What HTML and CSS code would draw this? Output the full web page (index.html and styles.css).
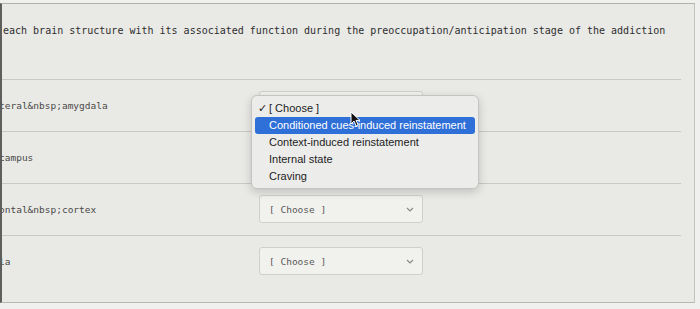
FILE: index.html
```html
<!DOCTYPE html>
<html lang="en">
<head>
    <meta charset="UTF-8">
    <meta name="viewport" content="width=device-width, initial-scale=1.0">
    <title>Match brain structures</title>
    <link rel="stylesheet" href="styles.css">
</head>
<body>
    <div class="page">
        <div class="frame">
            <p class="prompt">each brain structure with its associated function during the preoccupation/anticipation stage of the addiction</p>

            <div class="row">
                <span class="label">teral&amp;nbsp;amygdala</span>
                <div class="select"><span>[ Choose ]</span><svg width="8" height="5" viewBox="0 0 8 5"><path d="M1 1l3 3 3-3" fill="none" stroke="#8a8a8a" stroke-width="1.2"/></svg></div>
            </div>
            <div class="row">
                <span class="label">campus</span>
                <div class="select"><span>[ Choose ]</span><svg width="8" height="5" viewBox="0 0 8 5"><path d="M1 1l3 3 3-3" fill="none" stroke="#8a8a8a" stroke-width="1.2"/></svg></div>
            </div>
            <div class="row">
                <span class="label">ontal&amp;nbsp;cortex</span>
                <div class="select"><span>[ Choose ]</span><svg width="8" height="5" viewBox="0 0 8 5"><path d="M1 1l3 3 3-3" fill="none" stroke="#8a8a8a" stroke-width="1.2"/></svg></div>
            </div>
            <div class="row last">
                <span class="label">la</span>
                <div class="select"><span>[ Choose ]</span><svg width="8" height="5" viewBox="0 0 8 5"><path d="M1 1l3 3 3-3" fill="none" stroke="#8a8a8a" stroke-width="1.2"/></svg></div>
            </div>
        </div>

        <!-- open native dropdown of the first select -->
        <ul class="menu">
            <li class="item first"><span class="check">&#10003;</span>[ Choose ]</li>
            <li class="item active">Conditioned cues-induced reinstatement</li>
            <li class="item">Context-induced reinstatement</li>
            <li class="item">Internal state</li>
            <li class="item">Craving</li>
        </ul>

        <svg class="cursor" width="11" height="16" viewBox="0 0 11 16">
            <path d="M1 1v12l3-3 2.2 5 2-1-2.2-4.6H10z" fill="#111" stroke="#fff" stroke-width="1"/>
        </svg>
    </div>
</body>
</html>
```
FILE: styles.css
```css
body {
    margin: 0;
    padding: 0;
    background-color: #f0f0ee;
    overflow: hidden;
}

.page {
    position: relative;
    width: 700px;
    height: 309px;
    overflow: hidden;
}

.frame {
    width: 692px;
    margin-top: 3px;
    background-color: #e9e9e6;
    border-top: 1px solid #b2b2ae;
    border-left: 2px solid #5e5e5c;
    border-right: 1px solid #c2c2be;
    border-bottom: 1px solid #b6b6b2;
    overflow: hidden;
}

.prompt {
    margin: 0;
    height: 55px;
    padding: 20px 0 0 1px;
    font-family: "DejaVu Sans Mono", monospace;
    font-size: 10px;
    line-height: 14px;
    color: #2e2e2e;
    white-space: nowrap;
}

.row {
    display: flex;
    align-items: center;
    margin-right: 13px;
    padding: 11px 0 12px;
    border-top: 1px solid #c8c8c4;
}

.row.last {
    padding-bottom: 27px;
}

.label {
    flex: 0 0 260px;
    margin-left: -3px;
    font-family: "DejaVu Sans Mono", monospace;
    font-size: 9.5px;
    color: #4a4a48;
}

.select {
    box-sizing: border-box;
    display: flex;
    align-items: center;
    justify-content: space-between;
    width: 164px;
    height: 28px;
    padding: 0 8px 0 9px;
    background-color: #f1f1ee;
    border: 1px solid #cfcfcb;
    border-radius: 3px;
    font-family: "DejaVu Sans Mono", monospace;
    font-size: 9.5px;
    color: #5a5a58;
}

.menu {
    position: absolute;
    left: 251px;
    top: 95px;
    width: 226px;
    margin: 0;
    padding: 4px 0 3px;
    list-style: none;
    background-color: #ececeb;
    border: 1px solid #c4c4c2;
    border-radius: 6px;
    box-shadow: 0 3px 10px rgba(0, 0, 0, 0.18);
    font-family: "Liberation Sans", Arial, sans-serif;
    font-size: 11px;
    color: #1c1c1c;
}

.item {
    height: 17px;
    line-height: 17px;
    padding-left: 17px;
    white-space: nowrap;
}

.item.first {
    padding-left: 6px;
}

.check {
    display: inline-block;
    width: 11px;
}

.item.active {
    margin: 0 3px;
    padding-left: 14px;
    background-color: #2f6fd8;
    border-radius: 3px;
    color: #fff;
}

.cursor {
    position: absolute;
    left: 350px;
    top: 111px;
}
```
